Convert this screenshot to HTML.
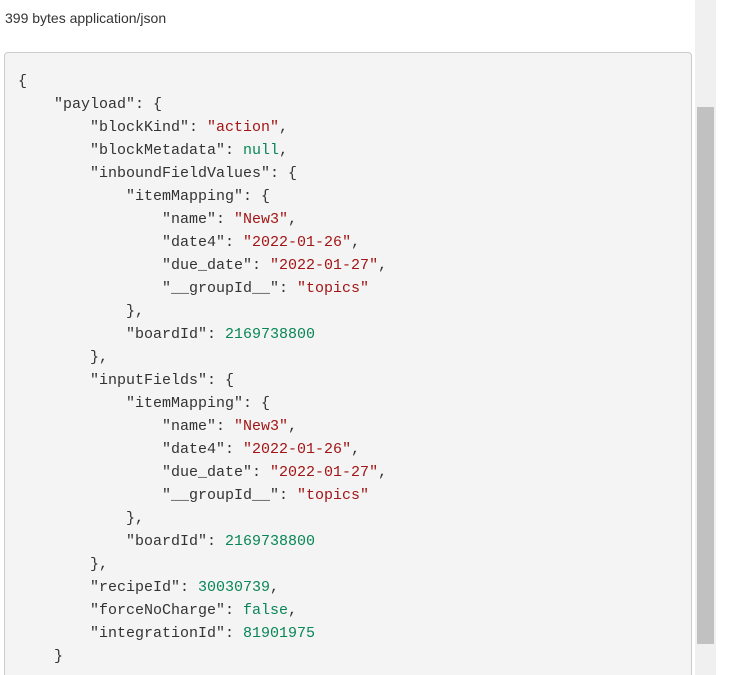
<!DOCTYPE html>
<html><head><meta charset="utf-8"><style>
html,body{margin:0;width:741px;height:675px;overflow:hidden}
body{background:#fff;position:relative;font-family:"Liberation Sans",sans-serif}
.hdr{position:absolute;left:5px;top:10px;font-size:14px;color:#333}
.box{position:absolute;left:4px;top:52px;width:688px;height:623px;background:#f4f4f4;border:1px solid #ccc;border-bottom:none;border-radius:4px 4px 0 0;box-sizing:border-box}
pre{margin:0;position:absolute;left:18px;top:70px;font-family:"Liberation Mono",monospace;font-size:15px;line-height:23px;color:#333}
.s{color:#a31515}.n{color:#098658}
.track{position:absolute;left:695px;top:0;width:21px;height:675px;background:#f0f0f0}
.thumb{position:absolute;left:697px;top:107px;width:17px;height:537px;background:#c1c1c1}
</style></head><body>
<div class="hdr">399 bytes application/json</div>
<div class="box"></div>
<pre>{
    "payload": {
        "blockKind": <span class="s">"action"</span>,
        "blockMetadata": <span class="n">null</span>,
        "inboundFieldValues": {
            "itemMapping": {
                "name": <span class="s">"New3"</span>,
                "date4": <span class="s">"2022-01-26"</span>,
                "due_date": <span class="s">"2022-01-27"</span>,
                "__groupId__": <span class="s">"topics"</span>
            },
            "boardId": <span class="n">2169738800</span>
        },
        "inputFields": {
            "itemMapping": {
                "name": <span class="s">"New3"</span>,
                "date4": <span class="s">"2022-01-26"</span>,
                "due_date": <span class="s">"2022-01-27"</span>,
                "__groupId__": <span class="s">"topics"</span>
            },
            "boardId": <span class="n">2169738800</span>
        },
        "recipeId": <span class="n">30030739</span>,
        "forceNoCharge": <span class="n">false</span>,
        "integrationId": <span class="n">81901975</span>
    }</pre>
<div class="track"></div><div class="thumb"></div>
</body></html>
